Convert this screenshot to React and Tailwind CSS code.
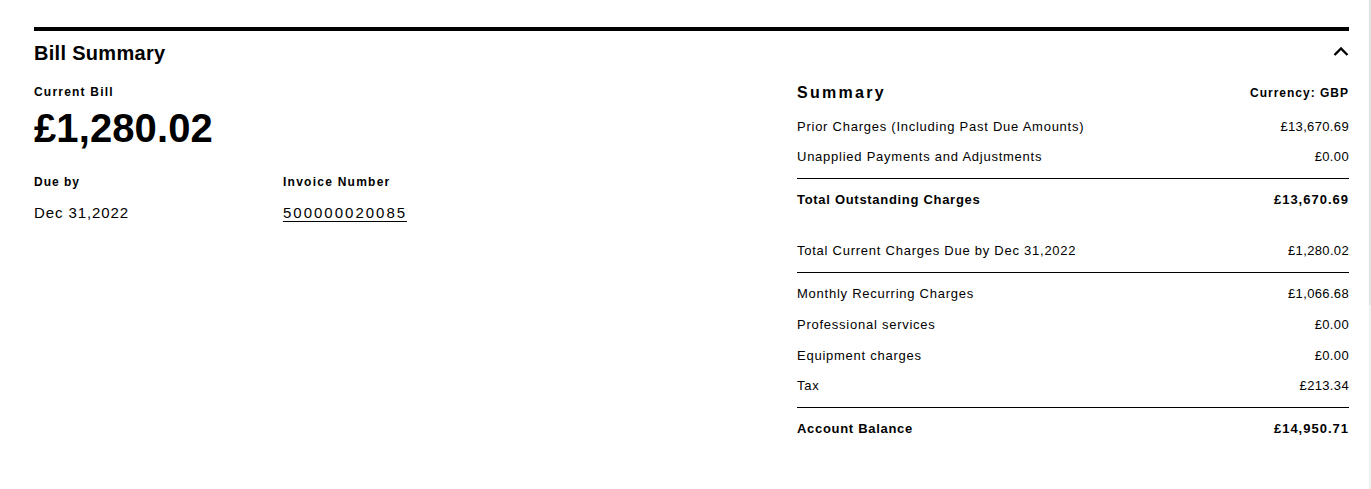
import React from "react";

const font = { fontFamily: '"Liberation Sans", Arial, sans-serif' };

const Row = ({ label, value, bold = false, tall = false }) => (
  <div
    className={`flex items-center justify-between ${tall ? "h-[31px]" : "h-[30px]"} text-[13px] text-black ${
      bold ? "font-bold" : ""
    }`}
  >
    <span className={bold ? "tracking-[0.7px]" : "tracking-[0.75px]"}>{label}</span>
    <span className={bold ? "tracking-[1px]" : "tracking-[0.35px]"}>{value}</span>
  </div>
);

const Rule = ({ after = "mb-[6px]" }) => <div className={`mt-[6px] ${after} h-px bg-black`} />;

const App = () => {
  return (
    <div className="flex min-h-[489px] w-full bg-white text-black" style={font}>
      <main className="flex-1 pl-[34px] pr-[20px] pt-[27px]">
        <section className="border-t-4 border-black">
          <header className="flex h-[43px] items-center justify-between">
            <h2 className="text-[20px] font-bold tracking-[0.3px]">Bill Summary</h2>
            <button className="flex h-[20px] w-[20px] items-center justify-end" aria-label="Collapse">
              <svg width="16" height="9" viewBox="0 0 16 9" fill="none" className="-mt-[2px]">
                <polyline points="1.5,8 8,1.5 14.5,8" stroke="#000" strokeWidth="2.4" />
              </svg>
            </button>
          </header>

          <div className="flex">
            <div className="flex-1">
              <p className="mt-[10px] text-[12px] font-bold leading-[16px] tracking-[1.2px]">Current Bill</p>
              <p className="mt-[6px] text-[40px] font-bold leading-[44px] tracking-[0.1px]">£1,280.02</p>
              <div className="mt-[24px] grid grid-cols-[249px_1fr]">
                <div>
                  <p className="text-[12px] font-bold leading-[16px] tracking-[1px]">Due by</p>
                  <p className="mt-[14px] text-[15px] leading-[18px] tracking-[0.9px]">Dec 31,2022</p>
                </div>
                <div>
                  <p className="text-[12px] font-bold leading-[16px] tracking-[1.25px]">Invoice Number</p>
                  <a className="mt-[14px] inline-block border-b border-black text-[15px] leading-[17px] tracking-[2px]">
                    500000020085
                  </a>
                </div>
              </div>
            </div>

            <div className="w-[552px] pb-[30px]">
              <div className="flex h-[38px] items-center justify-between">
                <h3 className="text-[16px] font-bold tracking-[2.3px]">Summary</h3>
                <span className="text-[12px] font-bold tracking-[1px]">Currency: GBP</span>
              </div>
              <Row label="Prior Charges (Including Past Due Amounts)" value="£13,670.69" />
              <Row label="Unapplied Payments and Adjustments" value="£0.00" />
              <Rule />
              <Row label="Total Outstanding Charges" value="£13,670.69" bold />
              <div className="h-[21px]" />
              <Row label="Total Current Charges Due by Dec 31,2022" value="£1,280.02" />
              <Rule after="mb-[5px]" />
              <Row label="Monthly Recurring Charges" value="£1,066.68" tall />
              <Row label="Professional services" value="£0.00" tall />
              <Row label="Equipment charges" value="£0.00" tall />
              <Row label="Tax" value="£213.34" />
              <Rule />
              <Row label="Account Balance" value="£14,950.71" bold />
            </div>
          </div>
        </section>
      </main>
      <aside className="flex w-[2px] flex-col bg-[#f1f1f1]">
        <div className="h-[305px] bg-[#e2e2e2]" />
      </aside>
    </div>
  );
};

export default App;
